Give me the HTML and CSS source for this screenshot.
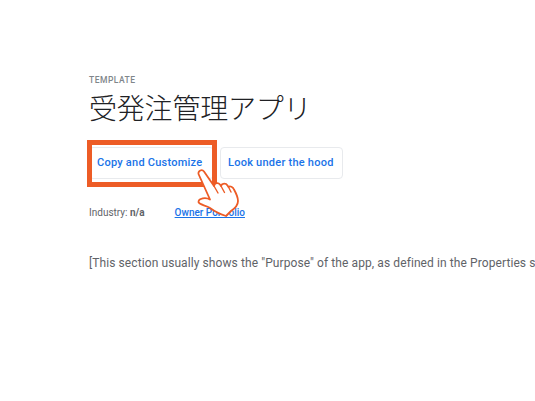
FILE: index.html
```html
<!DOCTYPE html>
<html lang="ja">
<head>
<meta charset="utf-8">
<title>受発注管理アプリ</title>
<link rel="stylesheet" href="styles.css">
</head>
<body>
<main class="page">
  <div class="eyebrow">TEMPLATE</div>
  <h1 class="title">受発注管理アプリ</h1>
  <div class="actions">
    <a class="btn btn-first">Copy and Customize</a>
    <a class="btn">Look under the hood</a>
    <div class="highlight"></div>
    <svg class="hand" viewBox="0 0 46 50" width="46" height="50">
      <path d="M2.5 6 C2 2.5 6 1 8 3.5 L18 18 C18.5 15 22 14 24 16.5 L25 18 C26 15 30 15 31.5 17.5 L32.5 19 C34 17.5 37 19 38 21.5 C40.5 26 42 29 42 33 C42 38 38 41 35 43 L30 48 C24 46 18 43 14 40 C10 37 3 37 2.5 34 C2.5 30 10 29 14 31.5 Z" fill="#fff" stroke="#ed5c26" stroke-width="1.8" stroke-linejoin="round"/>
      <path d="M18 18 L22 25 M25 18 L28.5 24.5 M32.5 19 L35 24" fill="none" stroke="#ed5c26" stroke-width="1.4" stroke-linecap="round"/>
    </svg>
  </div>
  <div class="meta">
    <span class="industry">Industry: <b>n/a</b></span>
    <a class="owner">Owner Portfolio</a>
  </div>
  <p class="purpose">[This section usually shows the "Purpose" of the app, as defined in the Properties section of the app editor.]</p>
</main>
</body>
</html>
```
FILE: styles.css
```css
html, body {
  margin: 0;
  height: 100%;
  background: #fff;
  overflow: hidden;
}
.page {
  padding: 75px 0 0 89px;
  font-family: Roboto, "Noto Sans CJK JP", sans-serif;
  white-space: nowrap;
}
.eyebrow {
  font-size: 8.5px;
  line-height: 10px;
  font-weight: 500;
  letter-spacing: 0.5px;
  color: #80868b;
}
.title {
  margin: 2px 0 0;
  font-family: "Noto Sans CJK JP", sans-serif;
  font-size: 28px;
  line-height: 40px;
  font-weight: 300;
  letter-spacing: -0.2px;
  color: #202124;
}
.actions {
  position: relative;
  display: flex;
  gap: 6px;
  margin-top: 20px;
}
.btn {
  display: block;
  box-sizing: border-box;
  height: 32px;
  padding: 0 8px 0 7px;
  border: 1px solid #e8eaed;
  border-radius: 4px;
  font-size: 11px;
  font-weight: 500;
  line-height: 30px;
  letter-spacing: 0.24px;
  color: #1a73e8;
  background: #fff;
}
.btn-first { width: 125px; }
.highlight {
  position: absolute;
  left: -2px;
  top: -7px;
  width: 130px;
  height: 47px;
  box-sizing: border-box;
  border: 5px solid #ed5c26;
}
.hand {
  position: absolute;
  left: 107px;
  top: 21px;
}
.meta {
  display: flex;
  gap: 30px;
  margin-top: 27px;
  font-size: 10px;
  line-height: 14px;
  color: #5f6368;
}
.owner {
  font-weight: 500;
  color: #1a73e8;
  text-decoration: underline;
}
.purpose {
  margin: 35px 0 0;
  font-size: 12px;
  line-height: 16px;
  letter-spacing: 0.09px;
  color: #5f6368;
}
```
